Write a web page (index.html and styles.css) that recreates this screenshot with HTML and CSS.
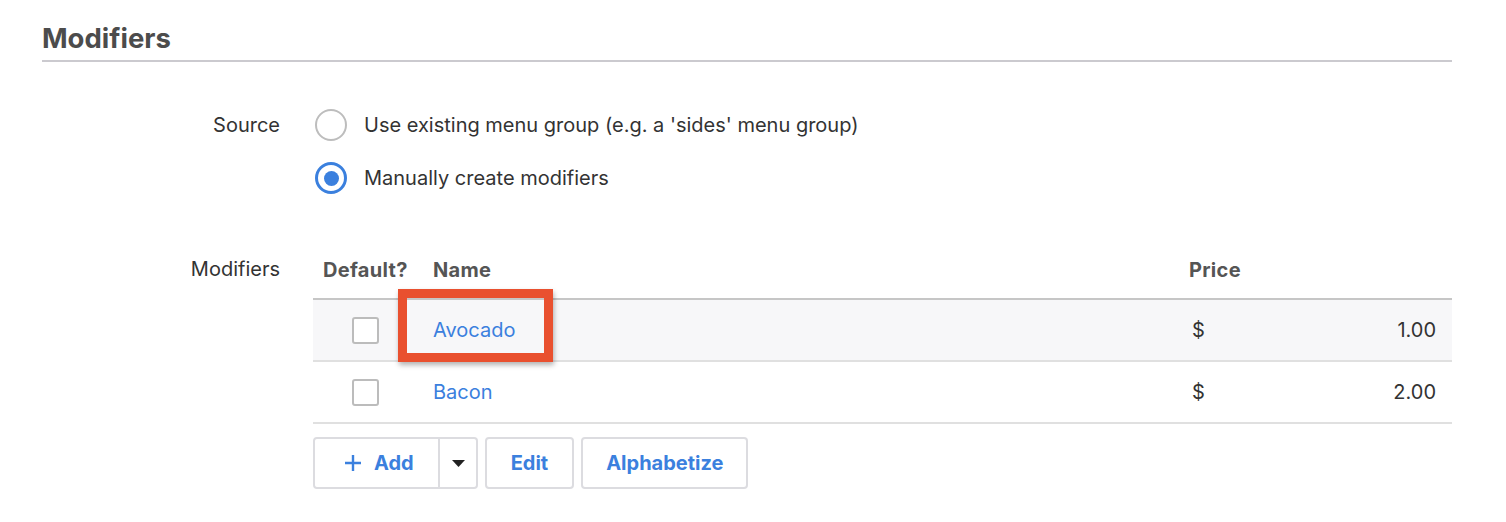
FILE: index.html
```html
<!DOCTYPE html>
<html lang="en">
<head>
    <meta charset="UTF-8">
    <meta name="viewport" content="width=device-width, initial-scale=1.0">
    <title>Modifiers</title>
    <link rel="stylesheet" href="styles.css">
</head>
<body>
    <div class="section">
        <h2 class="section-title">Modifiers</h2>

        <div class="field field-source">
            <div class="field-label">Source</div>
            <div class="field-body">
                <label class="radio">
                    <span class="radio-mark"></span>
                    Use existing menu group (e.g. a 'sides' menu group)
                </label>
                <label class="radio checked">
                    <span class="radio-mark"></span>
                    Manually create modifiers
                </label>
            </div>
        </div>

        <div class="field field-modifiers">
            <div class="field-label">Modifiers</div>
            <div class="field-body">
                <table class="mod-table">
                    <colgroup>
                        <col class="col-default">
                        <col>
                        <col class="col-price">
                    </colgroup>
                    <thead>
                        <tr>
                            <th>Default?</th>
                            <th>Name</th>
                            <th>Price</th>
                        </tr>
                    </thead>
                    <tbody>
                        <tr class="striped">
                            <td class="cell-check"><span class="checkbox"></span></td>
                            <td class="cell-name">
                                <a href="#" class="mod-link">Avocado</a>
                                <span class="highlight"></span>
                            </td>
                            <td class="cell-price"><span class="currency">$</span><span class="amount">1.00</span></td>
                        </tr>
                        <tr>
                            <td class="cell-check"><span class="checkbox"></span></td>
                            <td class="cell-name"><a href="#" class="mod-link">Bacon</a></td>
                            <td class="cell-price"><span class="currency">$</span><span class="amount">2.00</span></td>
                        </tr>
                    </tbody>
                </table>

                <div class="actions">
                    <div class="split-btn">
                        <button class="btn btn-main">
                            <svg class="plus" width="18" height="18" viewBox="0 0 18 18"><path d="M9 1v16M1 9h16" stroke="currentColor" stroke-width="2.4" fill="none"/></svg>
                            Add
                        </button>
                        <button class="btn btn-caret">
                            <svg width="13" height="7" viewBox="0 0 13 7"><path d="M0 0h13L6.5 7z" fill="#222"/></svg>
                        </button>
                    </div>
                    <button class="btn btn-edit">Edit</button>
                    <button class="btn">Alphabetize</button>
                </div>
            </div>
        </div>
    </div>
</body>
</html>
```

FILE: styles.css
```css
body {
    margin: 0;
    font-family: Inter, 'Noto Sans', sans-serif;
    font-size: 20px;
    color: #333;
    background-color: white;
}
.section {
    width: 1410px;
    padding: 22px 0 0 42px;
}
.section-title {
    margin: 0;
    font-size: 27.5px;
    line-height: 32px;
    font-weight: 700;
    color: #4c4c4c;
    padding-bottom: 6px;
    border-bottom: 2px solid #cbcacf;
}
.field {
    display: flex;
    gap: 33px;
}
.field-label {
    width: 238px;
    flex-shrink: 0;
    text-align: right;
    line-height: 32px;
}
.field-body {
    flex: 1;
}
.field-source {
    margin-top: 47px;
}
.field-modifiers {
    margin-top: 48px;
}
.field-modifiers .field-label {
    padding-top: 11px;
}

/* radios */
.radio {
    display: flex;
    align-items: center;
    gap: 17px;
    height: 32px;
    margin-left: 2px;
    margin-bottom: 21px;
    cursor: pointer;
}
.radio:last-child {
    margin-bottom: 0;
}
.radio-mark {
    width: 32px;
    height: 32px;
    box-sizing: border-box;
    border: 2.5px solid #bdbdbd;
    border-radius: 50%;
    display: flex;
    align-items: center;
    justify-content: center;
}
.radio.checked .radio-mark {
    border: 3.5px solid #3b80de;
}
.radio.checked .radio-mark::after {
    content: "";
    width: 15px;
    height: 15px;
    border-radius: 50%;
    background-color: #3b80de;
}

/* table */
.mod-table {
    width: 100%;
    table-layout: fixed;
    border-collapse: collapse;
}
.col-default {
    width: 110px;
}
.col-price {
    width: 273px;
}
.mod-table th {
    height: 56px;
    text-align: left;
    font-weight: 700;
    letter-spacing: 0.3px;
    color: #555;
    padding: 0 10px;
    border-bottom: 2px solid #c6c6c6;
}
.mod-table td {
    height: 60px;
    padding: 0 10px;
    border-bottom: 2px solid #e0e0e0;
}
.mod-table tr.striped td {
    background-color: #f7f7f9;
}
.mod-table td.cell-check {
    text-align: center;
    padding-left: 0;
    padding-right: 6px;
}
.mod-table td.cell-price {
    padding-right: 16px;
}
.checkbox {
    display: inline-block;
    vertical-align: middle;
    width: 27px;
    height: 27px;
    box-sizing: border-box;
    border: 2px solid #bcbcbc;
    border-radius: 3px;
    background-color: white;
}
.mod-link {
    color: #3b80de;
    text-decoration: none;
}
.currency {
    padding-left: 3px;
}
.amount {
    float: right;
}

/* annotation box around a row link */
.cell-name {
    position: relative;
}
.highlight {
    position: absolute;
    left: -25px;
    top: -11px;
    width: 155px;
    height: 73px;
    box-sizing: border-box;
    border: 9px solid #e9502f;
    box-shadow: 1px 3px 5px rgba(0, 0, 0, 0.3);
}

/* buttons */
.actions {
    display: flex;
    gap: 7px;
    margin-top: 13px;
}
.btn {
    height: 52px;
    padding: 0 23px;
    border: 2px solid #dcdce0;
    border-radius: 4px;
    background-color: white;
    color: #3b80de;
    font-family: inherit;
    font-size: 20px;
    font-weight: 700;
    cursor: pointer;
    display: flex;
    align-items: center;
    gap: 12px;
}
.btn-edit {
    padding: 0 24px;
}
.split-btn {
    display: flex;
    border: 2px solid #dcdce0;
    border-radius: 4px;
}
.split-btn .btn {
    border: none;
    height: 48px;
}
.btn-main {
    padding: 0 24px 0 29px;
    border-right: 2px solid #dcdce0 !important;
    border-radius: 4px 0 0 4px;
}
.btn-caret {
    padding: 0 11px 0 12px;
    border-radius: 0 4px 4px 0;
}
```
